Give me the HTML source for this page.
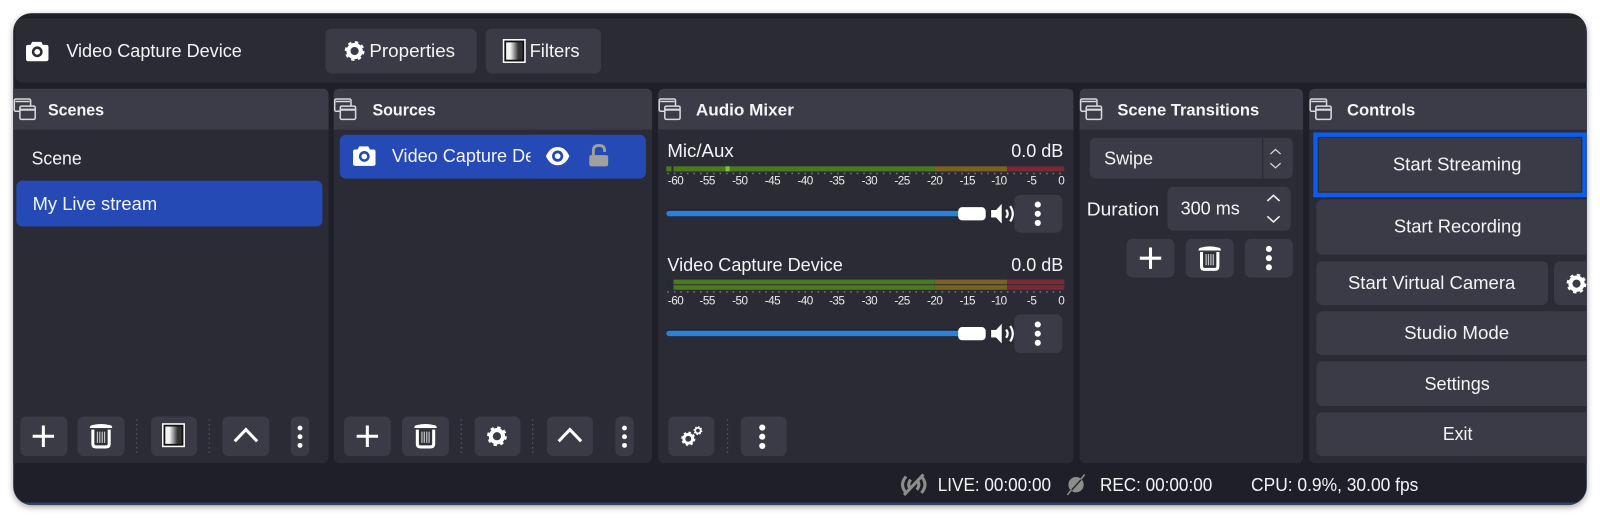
<!DOCTYPE html>
<html><head><meta charset="utf-8"><style>
html,body{margin:0;padding:0;background:#fff;width:1600px;height:518px;overflow:hidden}
svg{display:block}
text{font-family:"Liberation Sans",sans-serif;fill:#f4f4f6;font-size:18px}
.h{font-weight:bold;font-size:16px}
.t{font-size:11.500px;fill:#ececee;letter-spacing:-.5px}
.p{fill:#2a2b35}.d{fill:#3b3c47}.b{fill:#3a3b46}
</style></head><body>
<svg xmlns="http://www.w3.org/2000/svg" width="1600" height="518" viewBox="0 0 1568 507.64">
<defs>
<filter id="sh" x="-5%" y="-10%" width="110%" height="125%"><feDropShadow dx="0" dy="2" stdDeviation="3" flood-color="#000" flood-opacity=".35"/></filter>
<clipPath id="win"><rect x="13" y="13" width="1542" height="481" rx="18"/></clipPath>
<clipPath id="src"><rect x="333" y="132" width="187" height="43"/></clipPath>
<g id="dock" fill="none" stroke="#d8d8dc" stroke-width="1.500"><rect x="0" y="0" width="16" height="12" rx="1.500" fill="#3b3c47"/><rect x="5.500" y="7" width="15" height="13" rx="1.500" fill="#3b3c47"/><path d="M6 10.500h14" stroke-width="2"/><path d="M1 2.500h14" stroke-width="1.500"/></g>
<path id="cam" fill="#fff" fill-rule="evenodd" d="M-9 -6.500h2.500l1.500 -3h9l1.500 3h3.500q2 0 2 2v12q0 2-2 2h-18q-2 0-2-2v-12q0-2 2-2zM0 -5a5.300 5.300 0 1 0 .01 0zM0 -2.500a2.800 2.800 0 1 1 -.01 0z"/>
<g id="gear" fill="none" stroke="#fff"><circle r="6" stroke-width="4"/><circle r="8.300" stroke-width="2.800" stroke-dasharray="3.200 3.320"/></g>
<g id="plus" stroke="#fff" stroke-width="3"><path d="M-10.500 0h21M0 -10.500v21"/></g>
<g id="trash"><path d="M-11 -7.500q0 -3 3 -3q8 -2 16 0q3 0 3 3z" fill="#fff"/><path d="M-8 -6v14q0 3 3 3h10q3 0 3-3v-14" fill="#2f3039" stroke="#fff" stroke-width="3"/><path d="M-3.500 -4v11M-1.200 -4v11M1.200 -4v11M3.500 -4v11" stroke="#c4c4c8" stroke-width="1.200"/></g>
<path id="up" fill="none" stroke="#fff" stroke-width="3" d="M-11 6L0 -5.500L11 6"/>
<g id="keb" fill="#fff"><circle cy="-9" r="3"/><circle r="3"/><circle cy="9" r="3"/></g>
<g id="keb2" fill="#fff"><circle cy="-8.500" r="2.400"/><circle r="2.400"/><circle cy="8.500" r="2.400"/></g>
<linearGradient id="fg" x1="0" x2="1"><stop offset=".25" stop-color="#f4f4f4"/><stop offset=".45" stop-color="#aaa"/><stop offset=".75" stop-color="#333"/></linearGradient>
<g id="filt"><rect x="-10.500" y="-11" width="21" height="22" fill="#111" stroke="#fff" stroke-width="1.500"/><rect x="-8" y="-8.500" width="16" height="17" fill="url(#fg)"/></g>
<g id="spk"><path d="M-12 -4h5l6 -6.500v21l-6 -6.500h-5z" fill="#fff" stroke="#222" stroke-width=".6"/><path d="M3 -4q3 4 0 8M7 -7.500q5 7.500 0 15" fill="none" stroke="#fff" stroke-width="2.200"/></g>
</defs>

<rect x="13" y="13" width="1542" height="482" rx="18" fill="#2f4468" filter="url(#sh)"/>
<g clip-path="url(#win)">
<rect x="13" y="13" width="1542" height="481" fill="#1e1f28"/>
<rect x="15" y="18" width="1545" height="63" rx="7" class="p"/>

<!-- panels -->
<rect x="5" y="87" width="317" height="367" rx="6" class="p"/><path d="M5 87h311q6 0 6 6v34H5z" class="d"/>
<rect x="327" y="87" width="312" height="367" rx="6" class="p"/><path d="M333 87h300q6 0 6 6v34H327V93q0-6 6-6z" class="d"/>
<rect x="645" y="87" width="407" height="367" rx="6" class="p"/><path d="M651 87h395q6 0 6 6v34H645V93q0-6 6-6z" class="d"/>
<rect x="1058" y="87" width="219" height="367" rx="6" class="p"/><path d="M1064 87h207q6 0 6 6v34h-219V93q0-6 6-6z" class="d"/>
<rect x="1283" y="87" width="290" height="367" rx="6" class="p"/><path d="M1289 87h284v40h-290V93q0-6 6-6z" class="d"/>

<!-- top bar -->
<use href="#cam" x="36.500" y="50.500"/>
<text x="65" y="56" textLength="172" lengthAdjust="spacingAndGlyphs">Video Capture Device</text>
<rect x="319" y="28" width="148" height="44" rx="6" class="b"/>
<use href="#gear" x="347.500" y="50"/>
<text x="362" y="56" textLength="84" lengthAdjust="spacingAndGlyphs">Properties</text>
<rect x="476" y="28" width="113" height="44" rx="6" class="b"/>
<use href="#filt" x="504" y="50"/>
<text x="519" y="56" textLength="49" lengthAdjust="spacingAndGlyphs">Filters</text>

<!-- dock icons + titles -->
<use href="#dock" x="14" y="97"/><text class="h" x="47" y="113" textLength="55" lengthAdjust="spacingAndGlyphs">Scenes</text>
<use href="#dock" x="328" y="97"/><text class="h" x="365" y="113" textLength="62" lengthAdjust="spacingAndGlyphs">Sources</text>
<use href="#dock" x="646" y="97"/><text class="h" x="682" y="113" textLength="96" lengthAdjust="spacingAndGlyphs">Audio Mixer</text>
<use href="#dock" x="1059" y="97"/><text class="h" x="1095" y="113" textLength="139" lengthAdjust="spacingAndGlyphs">Scene Transitions</text>
<use href="#dock" x="1284" y="97"/><text class="h" x="1320" y="113" textLength="67" lengthAdjust="spacingAndGlyphs">Controls</text>

<!-- scenes -->
<text x="31" y="161" textLength="49" lengthAdjust="spacingAndGlyphs">Scene</text>
<rect x="16" y="177" width="300" height="45" rx="6" fill="#254ab5"/>
<text x="32" y="206" textLength="122" lengthAdjust="spacingAndGlyphs">My Live stream</text>

<!-- sources -->
<rect x="333" y="132" width="300" height="43" rx="6" fill="#254ab5"/>
<use href="#cam" x="357" y="153"/>
<g clip-path="url(#src)"><text x="384" y="159" textLength="172" lengthAdjust="spacingAndGlyphs">Video Capture Device</text></g>
<rect x="520" y="132" width="60" height="43" fill="#254ab5"/>
<path d="M535 153q4 -9 11.500 -9t11.500 9q-4 9-11.500 9t-11.500 -9z" fill="#fff"/><circle cx="546.500" cy="153" r="5.500" fill="#254ab5"/><circle cx="546.500" cy="153" r="2.800" fill="#fff"/>
<rect x="577.500" y="152" width="18.500" height="11" rx="2" fill="#a0a09c"/><path d="M581.500 152v-4.500q0-5 5.500-5t5.500 5v1.500" fill="none" stroke="#a0a09c" stroke-width="2.800"/>

<!-- mixer 1 -->
<text x="654" y="154" textLength="65" lengthAdjust="spacingAndGlyphs">Mic/Aux</text>
<text x="991" y="154" textLength="51" lengthAdjust="spacingAndGlyphs">0.0 dB</text>
<rect x="653" y="163" width="5" height="5" fill="#4a7a1c"/>
<rect x="660" y="163" width="256" height="5" fill="#4a7a1c"/>
<rect x="916" y="163" width="71" height="5" fill="#7a6220"/>
<rect x="987" y="163" width="56" height="5" fill="#7a2a35"/>
<rect x="711" y="163" width="4" height="5" fill="#7ec13c"/>
<path d="M654 170H1043" stroke="#77777c" stroke-width="1.500" stroke-dasharray="1.500 4.900"/>
<g text-anchor="middle">
<text class="t" x="662" y="181">-60</text><text class="t" x="693" y="181">-55</text><text class="t" x="725" y="181">-50</text><text class="t" x="757" y="181">-45</text><text class="t" x="789" y="181">-40</text><text class="t" x="820" y="181">-35</text><text class="t" x="852" y="181">-30</text><text class="t" x="884" y="181">-25</text><text class="t" x="916" y="181">-20</text><text class="t" x="948" y="181">-15</text><text class="t" x="979" y="181">-10</text><text class="t" x="1011" y="181">-5</text><text class="t" x="1040" y="181">0</text>
</g>
<rect x="653" y="205.500" width="290" height="7" rx="3.500" fill="#17181e"/>
<rect x="653" y="206.500" width="290" height="5.500" rx="2.700" fill="#2b80d9"/>
<rect x="939" y="203" width="27" height="13" rx="4" fill="#fff"/>
<use href="#spk" x="983" y="209.500"/>
<rect x="994" y="191" width="47" height="37" rx="6" class="b"/>
<use href="#keb" x="1017" y="209.500"/>

<!-- mixer 2 -->
<text x="654" y="265.500" textLength="172" lengthAdjust="spacingAndGlyphs">Video Capture Device</text>
<text x="991" y="265.500" textLength="51" lengthAdjust="spacingAndGlyphs">0.0 dB</text>
<rect x="653" y="274" width="7" height="10" fill="#252a38"/>
<rect x="660" y="274" width="256" height="10" fill="#4a7a1c"/>
<rect x="916" y="274" width="71" height="10" fill="#7a6220"/>
<rect x="987" y="274" width="56" height="10" fill="#7a2a35"/>
<rect x="653" y="278.600" width="390" height=".9" fill="#2a2b35"/>
<path d="M654 286H1043" stroke="#77777c" stroke-width="1.500" stroke-dasharray="1.500 4.900"/>
<g text-anchor="middle">
<text class="t" x="662" y="298.500">-60</text><text class="t" x="693" y="298.500">-55</text><text class="t" x="725" y="298.500">-50</text><text class="t" x="757" y="298.500">-45</text><text class="t" x="789" y="298.500">-40</text><text class="t" x="820" y="298.500">-35</text><text class="t" x="852" y="298.500">-30</text><text class="t" x="884" y="298.500">-25</text><text class="t" x="916" y="298.500">-20</text><text class="t" x="948" y="298.500">-15</text><text class="t" x="979" y="298.500">-10</text><text class="t" x="1011" y="298.500">-5</text><text class="t" x="1040" y="298.500">0</text>
</g>
<rect x="653" y="323" width="290" height="7" rx="3.500" fill="#17181e"/>
<rect x="653" y="324" width="290" height="5.500" rx="2.700" fill="#2b80d9"/>
<rect x="939" y="320.500" width="27" height="13" rx="4" fill="#fff"/>
<use href="#spk" x="983" y="327"/>
<rect x="994" y="308" width="47" height="38" rx="6" class="b"/>
<use href="#keb" x="1017" y="327"/>

<!-- transitions -->
<rect x="1068" y="135" width="199" height="40" rx="6" class="b"/>
<rect x="1237" y="135" width="1" height="40" fill="#26272f"/>
<text x="1082" y="161" textLength="48" lengthAdjust="spacingAndGlyphs">Swipe</text>
<path d="M1245 151l5-4.500l5 4.500M1245 160l5 4.500l5-4.500" fill="none" stroke="#d8d8da" stroke-width="1.200"/>
<text x="1065" y="211" textLength="71" lengthAdjust="spacingAndGlyphs">Duration</text>
<rect x="1144" y="183" width="121" height="43" rx="6" class="b"/>
<text x="1157" y="210" textLength="58" lengthAdjust="spacingAndGlyphs">300 ms</text>
<path d="M1242 197l6-5.500l6 5.500M1242 212l6 5.500l6-5.500" fill="none" stroke="#eee" stroke-width="1.600"/>
<rect x="1104" y="234" width="47" height="38" rx="6" class="b"/><use href="#plus" x="1127.500" y="253"/>
<rect x="1162" y="234" width="47" height="38" rx="6" class="b"/><use href="#trash" x="1185.500" y="253"/>
<rect x="1220" y="234" width="47" height="38" rx="6" class="b"/><use href="#keb" x="1243.500" y="253"/>

<!-- controls -->
<rect x="1289.200" y="132" width="263.600" height="59" fill="#3a3b46" stroke="#0a5cf5" stroke-width="4.400"/>
<rect x="1291.900" y="134.700" width="258.200" height="53.600" fill="none" stroke="#2e2a22" stroke-width="1"/>
<text x="1365" y="167" textLength="126" lengthAdjust="spacingAndGlyphs">Start Streaming</text>
<rect x="1290" y="195.500" width="280" height="54" rx="6" class="b"/>
<text x="1366" y="228" textLength="125" lengthAdjust="spacingAndGlyphs">Start Recording</text>
<rect x="1290" y="256" width="227" height="43" rx="6" class="b"/>
<text x="1321" y="283" textLength="164" lengthAdjust="spacingAndGlyphs">Start Virtual Camera</text>
<rect x="1523" y="256" width="50" height="43" rx="6" class="b"/>
<use href="#gear" x="1545" y="278"/>
<rect x="1290" y="305" width="280" height="43" rx="6" class="b"/>
<text x="1376" y="332" textLength="103" lengthAdjust="spacingAndGlyphs">Studio Mode</text>
<rect x="1290" y="354" width="280" height="44" rx="6" class="b"/>
<text x="1396" y="382" textLength="64" lengthAdjust="spacingAndGlyphs">Settings</text>
<rect x="1290" y="404" width="280" height="43" rx="6" class="b"/>
<text x="1414" y="431" textLength="29" lengthAdjust="spacingAndGlyphs">Exit</text>

<!-- bottom toolbars -->
<rect x="20" y="408" width="46" height="39" rx="6" class="b"/><use href="#plus" x="42.500" y="427.500"/>
<rect x="76" y="408" width="46" height="39" rx="6" class="b"/><use href="#trash" x="99" y="427"/>
<path d="M134 411V447M205 411V447M452 411V447M522 411V447M713 411V447" stroke="#55565e" stroke-width="1.200" stroke-dasharray="1.500 3"/>
<rect x="148" y="408" width="45" height="39" rx="6" class="b"/><use href="#filt" x="170" y="426.500"/>
<rect x="218" y="408" width="46" height="39" rx="6" class="b"/><use href="#up" x="241" y="426.500"/>
<rect x="285" y="408" width="18" height="39" rx="6" class="b"/><use href="#keb2" x="294" y="428"/>
<rect x="337" y="408" width="46" height="39" rx="6" class="b"/><use href="#plus" x="360" y="427.500"/>
<rect x="394" y="408" width="46" height="39" rx="6" class="b"/><use href="#trash" x="417" y="427"/>
<rect x="465" y="408" width="45" height="39" rx="6" class="b"/><use href="#gear" x="487" y="427.500"/>
<rect x="536" y="408" width="45" height="39" rx="6" class="b"/><use href="#up" x="558.500" y="426.500"/>
<rect x="603" y="408" width="18" height="39" rx="6" class="b"/><use href="#keb2" x="612" y="428"/>
<rect x="655" y="408" width="45" height="39" rx="6" class="b"/>
<g transform="translate(674.500 430) scale(.72)"><use href="#gear"/></g><g transform="translate(684 422) scale(.45)"><use href="#gear"/></g>
<rect x="726" y="408" width="45" height="39" rx="6" class="b"/><use href="#keb" x="747" y="428"/>

<!-- status bar -->
<g fill="none" stroke="#8d8d8d" stroke-width="3"><path d="M888 467q-7 8 0 16M903 467q7 8 0 16M892.500 470q-4 5 0 10M898.500 470q4 5 0 10"/><path d="M886 485L905 465" stroke-width="3"/></g>
<text x="919" y="481" textLength="111" lengthAdjust="spacingAndGlyphs">LIVE: 00:00:00</text>
<ellipse cx="1054.500" cy="475" rx="7.500" ry="7.500" fill="#8d8d8d"/><path d="M1046 485L1064 465" stroke="#1e1f28" stroke-width="1.300"/><path d="M1046 485L1050 480M1059 470L1063 465" stroke="#8d8d8d" stroke-width="1.500"/>
<text x="1078" y="481" textLength="110" lengthAdjust="spacingAndGlyphs">REC: 00:00:00</text>
<text x="1226" y="481" textLength="164" lengthAdjust="spacingAndGlyphs">CPU: 0.9%, 30.00 fps</text>
<rect x="13" y="492.500" width="1542" height="2" fill="#2f4468"/>
</g>
</svg>
</body></html>
